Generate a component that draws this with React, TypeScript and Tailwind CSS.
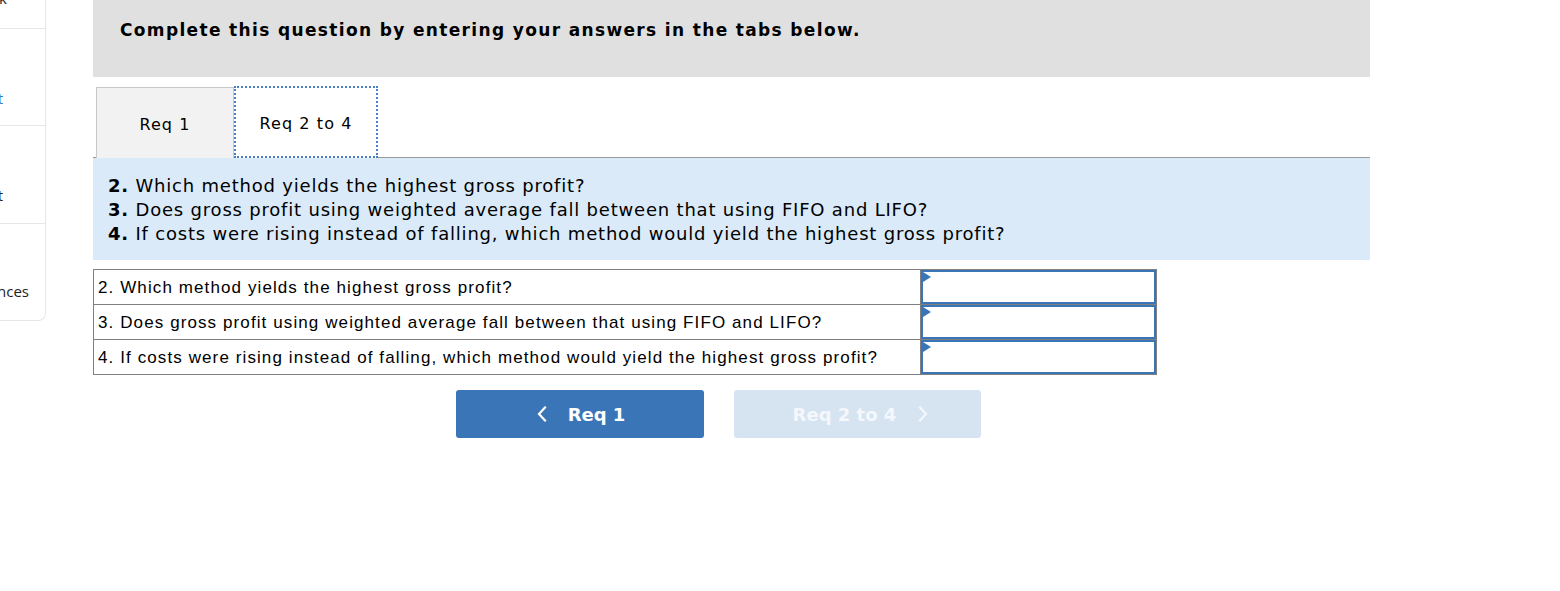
const verdana = { fontFamily: '"DejaVu Sans", Verdana, sans-serif' };

const questions = [
    { n: '2.', text: 'Which method yields the highest gross profit?' },
    { n: '3.', text: 'Does gross profit using weighted average fall between that using FIFO and LIFO?' },
    { n: '4.', text: 'If costs were rising instead of falling, which method would yield the highest gross profit?' },
];

function Sidebar() {
    // only the right edge of the side cards is in view
    const cards = [
        { label: 'eBook', box: 'h-[40px] -mt-[11px] pr-[38px] items-start', color: 'text-[#222]', round: '' },
        { label: 'Hint', box: 'h-[97px] pt-[60px] pr-[42px]', color: 'text-[#3a75b8]', round: '' },
        { label: 'Print', box: 'h-[98px] pt-[60px] pr-[42px]', color: 'text-[#222]', round: '' },
        { label: 'References', box: 'h-[97px] pt-[58px] pr-[16px]', color: 'text-[#222]', round: 'rounded-br-[8px]' },
    ];
    return (
        <div className="w-[46px] shrink-0 overflow-hidden">
            <div className="w-[180px] ml-[-134px] flex flex-col">
                {cards.map((c) => (
                    <div
                        key={c.label}
                        className={`${c.box} ${c.round} border-r border-b border-[#e6e6e6] bg-white flex justify-end`}
                    >
                        <span className={`text-[15px] leading-[18px] ${c.color}`} style={{ fontFamily: '"Open Sans", sans-serif' }}>
                            {c.label}
                        </span>
                    </div>
                ))}
            </div>
        </div>
    );
}

function Chevron({ dir }: { dir: 'left' | 'right' }) {
    return (
        <svg width="10" height="16" viewBox="0 0 10 16" fill="none" stroke="currentColor" strokeWidth="2.2" strokeLinecap="square">
            {dir === 'left' ? <polyline points="8,1.5 2,8 8,14.5" /> : <polyline points="2,1.5 8,8 2,14.5" />}
        </svg>
    );
}

export default function App() {
    return (
        <div className="w-[1560px] h-[591px] bg-white flex overflow-hidden">
            <Sidebar />
            <div className="w-[1277px] ml-[47px] shrink-0" style={verdana}>
                <div className="h-[77px] bg-[#e0e0e0] pl-[27px] pt-[19px]">
                    <h2 className="text-[17px] leading-[22px] font-bold text-black tracking-[1.35px]">
                        Complete this question by entering your answers in the tabs below.
                    </h2>
                </div>

                <div className="mt-[10px] flex border-b border-[#999] pl-[3px] h-[71px]">
                    <div className="w-[138px] h-[71px] pt-[3px] bg-[#f2f2f2] border border-[#c8c8c8] border-b-0 flex items-center justify-center text-[16px] tracking-[1.1px] text-black">
                        Req 1
                    </div>
                    <div className="w-[144px] h-[72px] pt-[3px] -mt-[1px] bg-white border-2 border-dotted border-[#4a7fc4] flex items-center justify-center text-[16px] tracking-[1.1px] text-black">
                        Req 2 to 4
                    </div>
                </div>

                <div className="bg-[#daeaf8] pl-[15px] pt-[16px] pb-[14px]">
                    {questions.map((q) => (
                        <p key={q.n} className="text-[18px] leading-[24px] tracking-[0.8px] text-black">
                            <span className="font-bold">{q.n}</span> {q.text}
                        </p>
                    ))}
                </div>

                <table className="mt-[9px] w-[1064px] border-collapse" style={{ fontFamily: '"Liberation Sans", Arial, sans-serif' }}>
                    <tbody>
                        {questions.map((q) => (
                            <tr key={q.n} className="h-[35px]">
                                <td className="w-[827px] border border-[#808080] pl-[4px] text-[17px] tracking-[1.1px] text-black leading-[20px] pt-[1px]">
                                    {q.n} {q.text}
                                </td>
                                <td className="border border-[#808080] p-0">
                                    <div className="relative h-[34px] border-2 border-[#3a75b8] bg-white">
                                        <svg className="absolute left-0 top-0" width="8" height="10" viewBox="0 0 8 10">
                                            <polygon points="0,0 8,5 0,10" fill="#3a75b8" />
                                        </svg>
                                    </div>
                                </td>
                            </tr>
                        ))}
                    </tbody>
                </table>

                <div className="mt-[15px] flex gap-[30px] pl-[363px]">
                    <button className="w-[248px] h-[48px] rounded-[3px] bg-[#3a75b8] text-white font-bold text-[18px] flex items-center justify-center gap-[21px] pl-[2px]">
                        <Chevron dir="left" />
                        <span>Req 1</span>
                    </button>
                    <button className="w-[247px] h-[48px] rounded-[3px] bg-[#d6e3f1] text-[#f4f7fb] font-bold text-[18px] flex items-center justify-center gap-[22px] pl-[6px]">
                        <span>Req 2 to 4</span>
                        <Chevron dir="right" />
                    </button>
                </div>
            </div>
        </div>
    );
}
